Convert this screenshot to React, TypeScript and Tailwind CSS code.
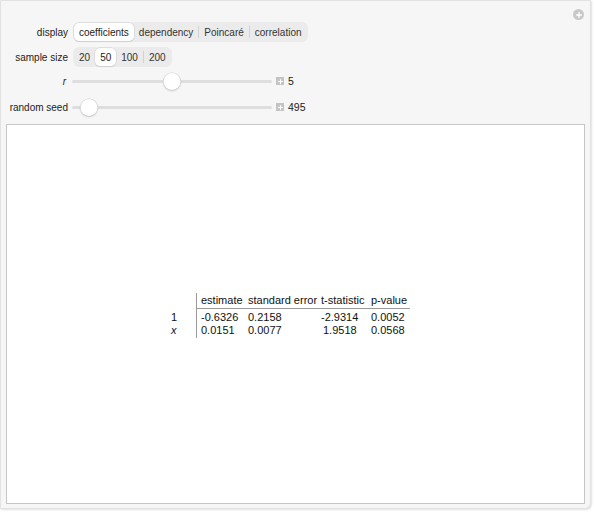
import { Plus } from 'lucide-react'

const font = { fontFamily: '"Liberation Sans", Arial, sans-serif' }

function Segmented({ items, selected }: { items: string[]; selected: number }) {
  return (
    <div className="flex h-[20px] items-center rounded-[6px] bg-[#ebebeb] px-[1px]">
      {items.map((item, i) => {
        const active = i === selected
        const showSep = i > 0 && i !== selected && i - 1 !== selected
        return (
          <div key={item} className="flex h-full items-center">
            {showSep && <div className="h-[12px] w-px bg-[#d2d2d2]" />}
            <div
              className={
                active
                  ? 'flex h-[18px] items-center rounded-[5px] bg-white px-[5px] text-[#222] shadow-[0_0_0_0.5px_#d0d0d0,0_1px_1px_rgba(0,0,0,0.12)]'
                  : 'flex h-[18px] items-center px-[5px] text-[#333]'
              }
            >
              {item}
            </div>
          </div>
        )
      })}
    </div>
  )
}

function Slider({ pos, value }: { pos: number; value: string }) {
  return (
    <div className="flex items-center">
      <div className="relative h-[20px] w-[200px]">
        <div className="absolute left-0 right-0 top-[9px] h-[3px] rounded-full bg-[#dedede]" />
        <div
          className="absolute top-[2px] h-[17px] w-[17px] -translate-x-1/2 rounded-full bg-white shadow-[0_0_0_0.5px_#c8c8c8,0_1px_2px_rgba(0,0,0,0.2)]"
          style={{ left: pos }}
        />
      </div>
      <div className="ml-[4px] flex h-[8px] w-[8px] items-center justify-center bg-[#c4c4c4]">
        <Plus size={7} strokeWidth={4} className="text-white" />
      </div>
      <span className="ml-[4px] text-[10.5px] text-[#222]">{value}</span>
    </div>
  )
}

const cols = 'grid grid-cols-[47px_73px_50px_39px]'

export default function App() {
  return (
    <div className="h-[512px] w-[594px] bg-white text-[10px] leading-[13px]" style={font}>
      <div className="flex h-[509px] w-[591px] flex-col rounded-br-[6px] border border-[#e2e2e2] bg-[#f6f6f6] shadow-[1px_1px_2px_rgba(0,0,0,0.12)]">
        <div className="flex justify-end pr-[6px] pt-[8px]">
          <div className="flex h-[11px] w-[11px] items-center justify-center rounded-full bg-[#c9c9c9]">
            <Plus size={8} strokeWidth={4} className="text-white" />
          </div>
        </div>
        <div className="mt-[2px] grid grid-cols-[67px_auto] items-center gap-x-[5px] text-[#222]">
          <div className="text-right">display</div>
          <div className="flex">
            <Segmented items={['coefficients', 'dependency', 'Poincaré', 'correlation']} selected={0} />
          </div>
          <div className="mt-[5px] text-right">sample size</div>
          <div className="mt-[5px] flex">
            <Segmented items={['20', '50', '100', '200']} selected={1} />
          </div>
          <div className="mt-[4px] pr-[2px] text-right italic">r</div>
          <div className="mt-[4px] -ml-[1px]">
            <Slider pos={100} value="5" />
          </div>
          <div className="mt-[6px] text-right">random seed</div>
          <div className="mt-[6px] -ml-[1px]">
            <Slider pos={17} value="495" />
          </div>
        </div>
        <div className="mx-[5px] mb-[4px] mt-[7px] flex flex-1 items-center justify-center border border-[#c6c6c6] bg-white">
          <div className="ml-[-10px] mt-[2px] grid grid-cols-[26px_auto] text-[11px] leading-[13px] text-[#111]">
            <div className="border-r border-[#9a9a9a]" />
            <div className={`${cols} border-b border-[#9a9a9a] pb-[1px] pl-[4px] pt-[1px]`}>
              <span>estimate</span>
              <span>standard error</span>
              <span>t-statistic</span>
              <span>p-value</span>
            </div>
            <div className="border-r border-[#9a9a9a] pt-[2px]">1</div>
            <div className={`${cols} pl-[4px] pt-[2px]`}>
              <span>-0.6326</span>
              <span>0.2158</span>
              <span>-2.9314</span>
              <span>0.0052</span>
            </div>
            <div className="border-r border-[#9a9a9a] pb-[1px] italic">x</div>
            <div className={`${cols} pb-[1px] pl-[4px]`}>
              <span>0.0151</span>
              <span>0.0077</span>
              <span className="pl-[2px]">1.9518</span>
              <span>0.0568</span>
            </div>
          </div>
        </div>
      </div>
    </div>
  )
}
